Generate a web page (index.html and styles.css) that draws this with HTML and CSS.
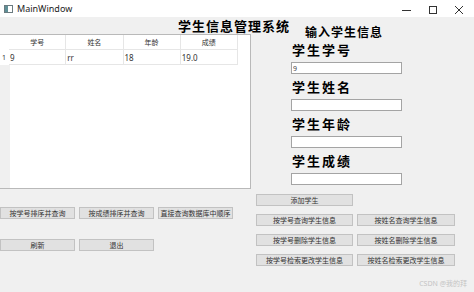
FILE: index.html
```html
<!DOCTYPE html>
<html lang="zh">
<head>
  <meta charset="UTF-8">
  <title>MainWindow</title>
  <link rel="stylesheet" href="styles.css">
</head>
<body>
  <div class="window">
    <div class="titlebar">
      <svg class="app-icon" width="9" height="8" viewBox="0 0 9 8">
        <rect x="0.5" y="0.5" width="8" height="7" fill="#fff" stroke="#6b7b80"/>
        <rect x="1" y="1" width="3" height="6" fill="#5f8f96"/>
      </svg>
      <span class="win-title">MainWindow</span>
      <div class="win-controls">
        <svg width="10" height="10" viewBox="0 0 10 10"><path d="M0 5.5h9" stroke="#333" stroke-width="1"/></svg>
        <svg width="10" height="10" viewBox="0 0 10 10"><rect x="1.5" y="1.5" width="7" height="7" fill="none" stroke="#333"/></svg>
        <svg width="10" height="10" viewBox="0 0 10 10"><path d="M1 1l8 8M9 1l-8 8" stroke="#333" stroke-width="1"/></svg>
      </div>
    </div>

    <div class="client">
      <div class="left-pane">
        <div class="app-title">学生信息管理系统</div>
        <div class="table-box">
          <table class="grid">
            <thead>
              <tr>
                <th class="corner"></th>
                <th>学号</th>
                <th>姓名</th>
                <th>年龄</th>
                <th>成绩</th>
              </tr>
            </thead>
            <tbody>
              <tr>
                <td class="row-head">1</td>
                <td>9</td>
                <td>rr</td>
                <td>18</td>
                <td>19.0</td>
              </tr>
            </tbody>
          </table>
        </div>
        <div class="btn-row first">
          <button class="btn">按学号排序并查询</button>
          <button class="btn">按成绩排序并查询</button>
          <button class="btn">直接查询数据库中顺序</button>
        </div>
        <div class="btn-row second">
          <button class="btn">刷新</button>
          <button class="btn">退出</button>
        </div>
      </div>

      <div class="right-pane">
        <div class="form">
          <div class="form-title">输入学生信息</div>
          <div class="field-label">学生学号</div>
          <input class="field" type="text" value="9">
          <div class="field-label">学生姓名</div>
          <input class="field" type="text">
          <div class="field-label">学生年龄</div>
          <input class="field" type="text">
          <div class="field-label">学生成绩</div>
          <input class="field" type="text">
        </div>
        <div class="action-grid">
          <button class="btn">添加学生</button>
          <span></span>
          <button class="btn">按学号查询学生信息</button>
          <button class="btn">按姓名查询学生信息</button>
          <button class="btn">按学号删除学生信息</button>
          <button class="btn">按姓名删除学生信息</button>
          <button class="btn">按学号检索更改学生信息</button>
          <button class="btn">按姓名检索更改学生信息</button>
        </div>
      </div>
    </div>

    <div class="watermark">CSDN @我的拜</div>
  </div>
</body>
</html>
```

FILE: styles.css
```css
/* Reset */
body, html {
  margin: 0;
  padding: 0;
  font-family: "Noto Sans", "Noto Sans CJK SC", sans-serif;
}

.window {
  position: relative;
  width: 474px;
  height: 292px;
  display: flex;
  flex-direction: column;
  background: #f0f0f0;
  overflow: hidden;
}

/* Title bar */
.titlebar {
  height: 17px;
  background: #fff;
  display: flex;
  align-items: center;
}

.app-icon {
  margin-left: 4px;
}

.win-title {
  margin-left: 4px;
  font-size: 9px;
  color: #222;
}

.win-controls {
  margin-left: auto;
  display: flex;
  gap: 16px;
  margin-right: 10px;
  margin-top: 3px;
}

/* Client area */
.client {
  flex: 1;
  display: flex;
}

.left-pane {
  width: 251px;
}

.app-title {
  height: 17px;
  line-height: 17px;
  padding-left: 178px;
  white-space: nowrap;
  font-family: "Noto Sans CJK SC", sans-serif;
  font-size: 13px;
  font-weight: 700;
  letter-spacing: 1px;
  color: #000;
}

/* Table */
.table-box {
  height: 155px;
  box-sizing: border-box;
  border: 1px solid #b9b9b9;
  border-left: none;
  background: linear-gradient(to right, #f0f0f0 10px, #fff 10px);
}

.grid {
  border-collapse: collapse;
  table-layout: fixed;
  width: 238px;
  font-family: "Noto Sans CJK SC", sans-serif;
  font-size: 7px;
  color: #333;
}

.grid th,
.grid td {
  width: 56px;
  height: 14px;
  padding: 0;
  background: #fff;
  border-right: 1px solid #e6e6e6;
  border-bottom: 1px solid #e6e6e6;
  font-weight: 400;
}

.grid td {
  text-align: left;
  padding-left: 1px;
  font-family: "Noto Sans", sans-serif;
  font-size: 8px;
}

.grid .corner,
.grid .row-head {
  width: 9px;
  border-right: none;
  border-bottom: none;
}

.grid .row-head {
  padding-left: 2px;
  font-size: 7px;
}

/* Buttons */
.btn {
  height: 12px;
  margin: 0;
  padding: 0;
  box-sizing: border-box;
  background: #e1e1e1;
  border: 1px solid #c2c2c2;
  font-family: "Noto Sans CJK SC", sans-serif;
  font-size: 7px;
  line-height: 10px;
  color: #333;
}

.btn-row {
  display: flex;
  gap: 4px;
}

.btn-row .btn {
  width: 75px;
}

.btn-row.first {
  margin-top: 18px;
}

.btn-row.second {
  margin-top: 20px;
}

/* Right side form */
.right-pane {
  padding-left: 5px;
}

.form {
  padding-left: 35px;
  display: flex;
  flex-direction: column;
  align-items: flex-start;
}

.form-title {
  margin-top: 8px;
  padding-left: 14px;
  height: 13px;
  line-height: 13px;
  font-family: "Noto Sans CJK SC", sans-serif;
  font-size: 12px;
  font-weight: 700;
  letter-spacing: 1px;
  color: #000;
}

.field-label {
  margin-top: 4px;
  padding-left: 1px;
  height: 16px;
  line-height: 16px;
  font-family: "Noto Sans CJK SC", sans-serif;
  font-size: 13px;
  font-weight: 700;
  letter-spacing: 2px;
  color: #000;
}

.field {
  margin: 4px 0 1px 0;
  width: 111px;
  height: 12px;
  box-sizing: border-box;
  padding: 0 1px;
  border: 1px solid #a4a4a4;
  background: #fff;
  font-family: "Noto Sans", sans-serif;
  font-size: 7px;
  color: #444;
  outline: none;
}

.action-grid {
  margin-top: 8px;
  display: grid;
  grid-template-columns: 97px 98px;
  grid-auto-rows: 12px;
  column-gap: 4px;
  row-gap: 8px;
}

.watermark {
  position: absolute;
  right: 7px;
  bottom: 4px;
  font-family: "Noto Sans", "Noto Sans CJK SC", sans-serif;
  font-size: 7px;
  color: #c4c4c4;
}
```
